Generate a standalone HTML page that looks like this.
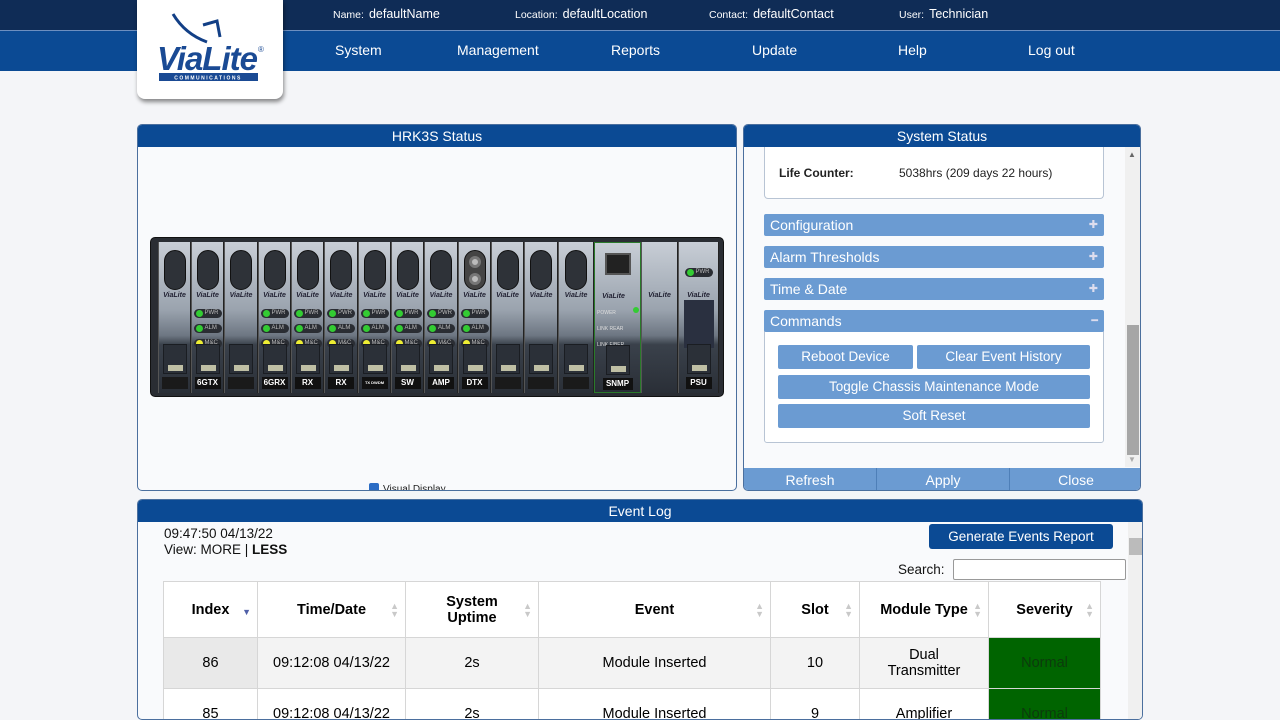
<!DOCTYPE html>
<html><head><meta charset="utf-8"><style>
*{box-sizing:border-box;margin:0;padding:0}
body{width:1280px;height:720px;overflow:hidden;background:#f4f5f8;font-family:"Liberation Sans",sans-serif;position:relative}
.a{position:absolute}
.top{left:0;top:0;width:1280px;height:30px;background:#0f2c56}
.nav{left:0;top:30px;width:1280px;height:41px;background:#0b4a94;border-top:1px solid #6d8fc0}
.ti{top:7px;color:#fff;font-size:12.5px}.ti small{font-size:10.5px;margin-right:5px}
.ni{top:42px;color:#fff;font-size:14px}
.panel{background:#f9fafc;border:1px solid #4b6f9e;border-radius:5px;overflow:hidden}
.ph{position:absolute;z-index:5;left:0;top:0;right:0;height:22px;background:#0b4a94;color:#fff;font-size:14px;text-align:center;line-height:22px}
.acc{position:absolute;left:20px;width:340px;height:22px;background:#6b9bd2;color:#fff;font-size:14px;line-height:22px;padding-left:6px;border-radius:2px}
.acc i{position:absolute;right:6px;top:0;font-style:normal;font-size:11px;color:#dde}
.btn{position:absolute;height:24px;background:#6b9bd2;color:#fff;font-size:13.5px;text-align:center;line-height:24px;border-radius:2px}
.sl{position:absolute;top:4px;height:151px;background:linear-gradient(#c8ced6 0%,#9aa3ae 45%,#6d7682 62%,#3a414b 68%,#2a2f37 100%);border-left:1px solid #555;border-right:1px solid #222}
.ov{position:absolute;left:50%;margin-left:-11px;top:8px;width:22px;height:40px;border-radius:11px;background:#2e3238;border:1px solid #111}
.lg{position:absolute;left:0;right:0;top:50px;text-align:center;font-size:7px;font-weight:bold;font-style:italic;color:#223}
.led{position:absolute;left:50%;margin-left:-14px;width:28px;height:9px;border-radius:5px;background:#2a2d33;font-size:6px;color:#bbb;line-height:9px;padding-left:11px}
.led b{position:absolute;left:2px;top:1px;width:7px;height:7px;border-radius:50%;background:#3c3}
.led.y b{background:#ee3}
.pt{position:absolute;left:50%;margin-left:-12px;top:102px;width:24px;height:30px;background:#2b3038;border:1px solid #1a1d22}
.pt:after{content:"";position:absolute;left:4px;top:20px;width:15px;height:6px;background:#bfbfa4}
.lb{position:absolute;left:50%;margin-left:-13px;top:135px;width:26px;height:12px;background:#111;color:#fff;font-size:8px;font-weight:bold;text-align:center;line-height:12px}
table{border-collapse:collapse;position:absolute;left:25px;top:81px;width:938px;font-size:14.5px;text-align:center}
td,th{border:1px solid #d6d6d6;background:#fff}
th{height:56px;font-weight:bold;position:relative}
th i{position:absolute;right:6px;top:20px;font-style:normal;font-size:9px;color:#c9c9c9;line-height:8px}
td{height:51px}
</style></head><body>
<div class="a top"></div>
<div class="a nav"></div>
<div class="a ti" style="left:333px"><small>Name:</small>defaultName</div>
<div class="a ti" style="left:515px"><small>Location:</small>defaultLocation</div>
<div class="a ti" style="left:709px"><small>Contact:</small>defaultContact</div>
<div class="a ti" style="left:899px"><small>User:</small>Technician</div>
<div class="a ni" style="left:335px">System</div>
<div class="a ni" style="left:457px">Management</div>
<div class="a ni" style="left:611px">Reports</div>
<div class="a ni" style="left:752px">Update</div>
<div class="a ni" style="left:898px">Help</div>
<div class="a ni" style="left:1028px">Log out</div>
<div class="a" style="left:137px;top:0;width:146px;height:99px;background:#fff;border-radius:0 0 8px 8px;box-shadow:1px 3px 4px rgba(0,0,0,.45)">
<svg width="146" height="99" style="position:absolute;left:0;top:0"><path d="M36 14 Q48 34 70 42" stroke="#123f86" stroke-width="3" fill="none"/><path d="M66 25 L80 21 L83 37" stroke="#123f86" stroke-width="3" fill="none"/>
<text x="20" y="70" font-family="Liberation Sans" font-size="33" font-weight="bold" font-style="italic" fill="#1a4a94" letter-spacing="-1">ViaLite</text>
<text x="121" y="52" font-size="8" fill="#1a4a94" font-family="Liberation Sans">®</text>
<rect x="22" y="73" width="99" height="8" fill="#1a4a94"/><text x="71" y="79.5" font-size="5" fill="#fff" text-anchor="middle" font-family="Liberation Sans" letter-spacing="1.5" font-weight="bold">COMMUNICATIONS</text></svg></div>

<div class="a panel" style="left:137px;top:124px;width:600px;height:367px">
<div class="ph">HRK3S Status</div>
<div class="a" style="left:12px;top:112px;width:574px;height:160px;background:#2a2d33;border-radius:5px;border:1px solid #111">
<div class="sl" style="left:7px;width:33px"><div class="ov"></div><div class="lg">ViaLite</div><div class="pt"></div><div class="lb" style="background:#1a1a1a"></div></div>
<div class="sl" style="left:40px;width:33px"><div class="ov"></div><div class="lg">ViaLite</div><div class="led" style="top:67px"><b></b>PWR</div><div class="led" style="top:82px"><b></b>ALM</div><div class="led y" style="top:97px"><b></b>M&amp;C</div><div class="pt"></div><div class="lb">6GTX</div></div>
<div class="sl" style="left:73px;width:34px"><div class="ov"></div><div class="lg">ViaLite</div><div class="pt"></div><div class="lb" style="background:#1a1a1a"></div></div>
<div class="sl" style="left:107px;width:33px"><div class="ov"></div><div class="lg">ViaLite</div><div class="led" style="top:67px"><b></b>PWR</div><div class="led" style="top:82px"><b></b>ALM</div><div class="led y" style="top:97px"><b></b>M&amp;C</div><div class="pt"></div><div class="lb">6GRX</div></div>
<div class="sl" style="left:140px;width:33px"><div class="ov"></div><div class="lg">ViaLite</div><div class="led" style="top:67px"><b></b>PWR</div><div class="led" style="top:82px"><b></b>ALM</div><div class="led y" style="top:97px"><b></b>M&amp;C</div><div class="pt"></div><div class="lb">RX</div></div>
<div class="sl" style="left:173px;width:34px"><div class="ov"></div><div class="lg">ViaLite</div><div class="led" style="top:67px"><b></b>PWR</div><div class="led" style="top:82px"><b></b>ALM</div><div class="led y" style="top:97px"><b></b>M&amp;C</div><div class="pt"></div><div class="lb">RX</div></div>
<div class="sl" style="left:207px;width:33px"><div class="ov"></div><div class="lg">ViaLite</div><div class="led" style="top:67px"><b></b>PWR</div><div class="led" style="top:82px"><b></b>ALM</div><div class="led y" style="top:97px"><b></b>M&amp;C</div><div class="pt"></div><div class="lb" style="font-size:4px">TX DWDM</div></div>
<div class="sl" style="left:240px;width:33px"><div class="ov"></div><div class="lg">ViaLite</div><div class="led" style="top:67px"><b></b>PWR</div><div class="led" style="top:82px"><b></b>ALM</div><div class="led y" style="top:97px"><b></b>M&amp;C</div><div class="pt"></div><div class="lb">SW</div></div>
<div class="sl" style="left:273px;width:34px"><div class="ov"></div><div class="lg">ViaLite</div><div class="led" style="top:67px"><b></b>PWR</div><div class="led" style="top:82px"><b></b>ALM</div><div class="led y" style="top:97px"><b></b>M&amp;C</div><div class="pt"></div><div class="lb">AMP</div></div>
<div class="sl" style="left:307px;width:33px"><div class="ov" style="background:#444"><div style="margin:5px auto;width:12px;height:12px;border-radius:50%;background:#bbb;border:3px solid #777"></div><div style="margin:0 auto;width:12px;height:12px;border-radius:50%;background:#bbb;border:3px solid #777"></div></div><div class="lg">ViaLite</div><div class="led" style="top:67px"><b></b>PWR</div><div class="led" style="top:82px"><b></b>ALM</div><div class="led y" style="top:97px"><b></b>M&amp;C</div><div class="pt"></div><div class="lb">DTX</div></div>
<div class="sl" style="left:340px;width:33px"><div class="ov"></div><div class="lg">ViaLite</div><div class="pt"></div><div class="lb" style="background:#1a1a1a"></div></div>
<div class="sl" style="left:373px;width:34px"><div class="ov"></div><div class="lg">ViaLite</div><div class="pt"></div><div class="lb" style="background:#1a1a1a"></div></div>
<div class="sl" style="left:407px;width:36px"><div class="ov"></div><div class="lg">ViaLite</div><div class="pt"></div><div class="lb" style="background:#1a1a1a"></div></div>
<div class="sl" style="left:443px;width:47px;border:1px solid #2a7a2a"><div style="position:absolute;left:10px;top:10px;width:26px;height:22px;background:#222;border:2px solid #555"></div><div class="lg" style="left:-8px">ViaLite</div><div style="position:absolute;left:2px;top:62px;font-size:5px;color:#ddd;line-height:16px">POWER<br>LINK REAR<br>LINK FIBER</div><div style="position:absolute;left:38px;top:64px;width:6px;height:6px;border-radius:50%;background:#3c3"></div><div class="pt"></div><div class="lb" style="width:30px;margin-left:-15px">SNMP</div></div>
<div class="sl" style="left:490px;width:37px"><div class="lg">ViaLite</div></div>
<div class="sl" style="left:527px;width:41px"><div class="led" style="top:26px"><b></b>PWR</div><div class="lg">ViaLite</div><div style="position:absolute;left:5px;top:58px;width:30px;height:48px;background:#2a3040"></div><div class="pt"></div><div class="lb">PSU</div></div>
</div>
<div class="a" style="left:231px;top:358px;width:10px;height:10px;background:#2b6cc4;border-radius:2px"></div>
<div class="a" style="left:245px;top:359px;font-size:10px;color:#222">Visual Display</div>
</div>

<div class="a panel" style="left:743px;top:124px;width:398px;height:367px">
<div class="ph">System Status</div>
<div class="a" style="left:20px;top:10px;width:340px;height:64px;border:1px solid #b8c4d4;border-top:none;background:#fff;border-radius:0 0 4px 4px"></div>
<div class="a" style="left:35px;top:41px;font-size:12px;font-weight:bold;color:#222">Life Counter:</div>
<div class="a" style="left:155px;top:41px;font-size:12px;color:#222">5038hrs (209 days 22 hours)</div>
<div class="acc" style="top:89px">Configuration<i>✚</i></div>
<div class="acc" style="top:121px">Alarm Thresholds<i>✚</i></div>
<div class="acc" style="top:153px">Time &amp; Date<i>✚</i></div>
<div class="a" style="left:20px;top:185px;width:340px;height:133px;border:1px solid #b8c4d4;background:#fff;border-radius:3px"></div>
<div class="acc" style="top:185px">Commands<i>━</i></div>
<div class="btn" style="left:34px;top:220px;width:135px">Reboot Device</div>
<div class="btn" style="left:173px;top:220px;width:173px">Clear Event History</div>
<div class="btn" style="left:34px;top:250px;width:312px">Toggle Chassis Maintenance Mode</div>
<div class="btn" style="left:34px;top:279px;width:312px">Soft Reset</div>
<div class="a" style="left:381px;top:22px;width:16px;height:320px;background:#f0f0f0"></div>
<div class="a" style="left:383px;top:200px;width:12px;height:130px;background:#a6a6a6"></div>
<div class="a" style="left:384px;top:25px;font-size:8px;color:#666">▲</div>
<div class="a" style="left:384px;top:330px;font-size:8px;color:#aaa">▼</div>
<div class="a" style="left:0;top:343px;width:398px;height:24px;background:#6b9bd2;color:#fff;font-size:14px;line-height:24px;display:flex"><div style="flex:1;text-align:center;border-right:1px solid #4e7fb8">Refresh</div><div style="flex:1;text-align:center;border-right:1px solid #4e7fb8">Apply</div><div style="flex:1;text-align:center">Close</div></div>
</div>

<div class="a panel" style="left:137px;top:499px;width:1006px;height:221px">
<div class="ph">Event Log</div>
<div class="a" style="left:26px;top:26px;font-size:13.5px;color:#111;line-height:16px">09:47:50 04/13/22<br>View: MORE | <b>LESS</b></div>
<div class="a" style="left:791px;top:24px;width:184px;height:25px;background:#0b4a94;color:#fff;font-size:13.5px;text-align:center;line-height:25px;border-radius:3px">Generate Events Report</div>
<div class="a" style="left:760px;top:62px;font-size:13.5px;color:#111">Search:</div>
<div class="a" style="left:815px;top:59px;width:173px;height:21px;border:1px solid #999;background:#fff;border-radius:2px"></div>
<div class="a" style="left:990px;top:22px;width:15px;height:200px;background:#f0f0f0"></div>
<div class="a" style="left:991px;top:38px;width:13px;height:17px;background:#bbb"></div>
<table>
<tr><th style="width:94px">Index<i style="color:#5060a8;top:26px">▼</i></th><th style="width:148px">Time/Date<i>▲<br>▼</i></th><th style="width:133px">System<br>Uptime<i>▲<br>▼</i></th><th style="width:232px">Event<i>▲<br>▼</i></th><th style="width:89px">Slot<i>▲<br>▼</i></th><th style="width:129px">Module Type<i>▲<br>▼</i></th><th>Severity<i>▲<br>▼</i></th></tr>
<tr><td style="background:#e9e9e9">86</td><td style="background:#f3f3f3">09:12:08 04/13/22</td><td style="background:#f3f3f3">2s</td><td style="background:#f3f3f3">Module Inserted</td><td style="background:#f3f3f3">10</td><td style="background:#f3f3f3">Dual<br>Transmitter</td><td style="background:#006400;color:#0c3a0c">Normal</td></tr>
<tr><td style="height:34px">85</td><td>09:12:08 04/13/22</td><td>2s</td><td>Module Inserted</td><td>9</td><td>Amplifier</td><td style="background:#006400;color:#0c3a0c">Normal</td></tr>
</table>
</div>
</body></html>
